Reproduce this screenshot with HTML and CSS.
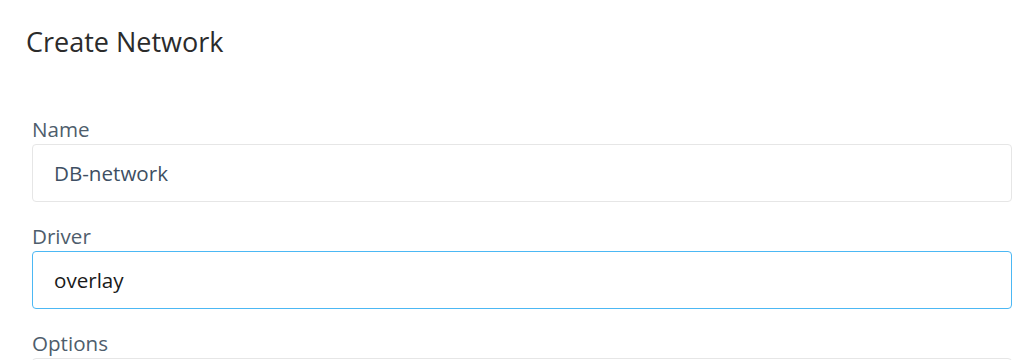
FILE: index.html
```html
<!DOCTYPE html>
<html lang="en">
<head>
<meta charset="utf-8">
<title>Create Network</title>
<link rel="stylesheet" href="styles.css">
</head>
<body>
<div class="page">
  <h1 class="title">Create Network</h1>
  <form class="form">
    <div class="field">
      <label class="label" for="name">Name</label>
      <input class="input" id="name" type="text" value="DB-network">
    </div>
    <div class="field">
      <label class="label" for="driver">Driver</label>
      <input class="input input-focus" id="driver" type="text" value="overlay">
    </div>
    <div class="field">
      <label class="label" for="options">Options</label>
      <input class="input" id="options" type="text" value="">
    </div>
  </form>
</div>
</body>
</html>
```

FILE: styles.css
```css
html, body {
  margin: 0;
  padding: 0;
  background: #ffffff;
}

body {
  font-family: "Open Sans", "Noto Sans", sans-serif;
}

.page {
  padding-top: 24px;
}

.title {
  margin: 0 0 0 26px;
  font-size: 27px;
  line-height: 36px;
  font-weight: 400;
  color: #2b2b2b;
}

.form {
  margin: 54px 0 0 0;
  padding: 0 12px 0 32px;
}

.field {
  margin-bottom: 19px;
}

.label {
  display: block;
  font-size: 20.6px;
  line-height: 30px;
  color: #4e5d6c;
}

.input {
  display: block;
  width: 100%;
  box-sizing: border-box;
  height: 58px;
  margin: 0;
  padding: 0 21px;
  border: 1px solid #e6e6e6;
  border-radius: 4px;
  background: #ffffff;
  font-family: "Open Sans", "Noto Sans", sans-serif;
  font-size: 20.6px;
  color: #3e4f63;
  outline: none;
}

.input-focus {
  border-color: #4cb8f4;
  color: #1a1a1a;
}
```
